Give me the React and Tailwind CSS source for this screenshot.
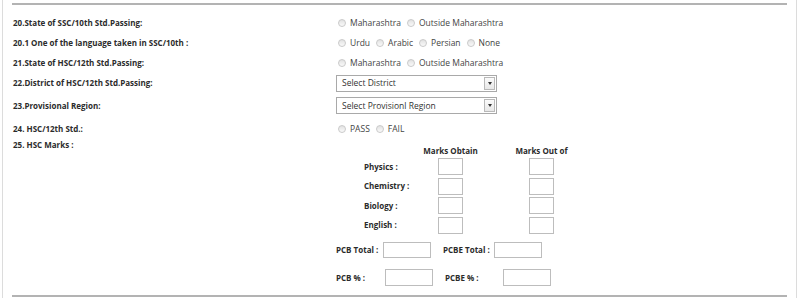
import React from 'react';

const font = { fontFamily: '"Open Sans", "Liberation Sans", sans-serif' };

function Radio({ label }) {
  return (
    <label className="flex items-center gap-[4px] mr-[6px] text-[8.5px]">
      <span className="w-[8px] h-[8px] rounded-full border border-[#cacaca] bg-gradient-to-b from-[#e2e2e2] to-[#fafafa]" />
      <span>{label}</span>
    </label>
  );
}

function Select({ text }) {
  return (
    <div className="flex items-center w-[161px] h-[17px] border border-[#a9a9a9] bg-white pl-[5px] pr-[1px] text-[8.5px]">
      <span className="flex-1 text-[#333]">{text}</span>
      <span className="w-[11px] h-[13px] border border-[#b9b9b9] bg-gradient-to-b from-[#fbfbfb] to-[#e8e8e8] flex items-center justify-center">
        <span className="w-0 h-0 border-l-[2.5px] border-r-[2.5px] border-t-[3px] border-l-transparent border-r-transparent border-t-[#333]" />
      </span>
    </div>
  );
}

function Row({ label, h, children }) {
  return (
    <div className={`flex items-center ${h}`}>
      <div className="w-[323px] font-bold text-[#2b2b2b]">{label}</div>
      <div className="flex items-center">{children}</div>
    </div>
  );
}

function Box({ w = 'w-[25px]', h = 'h-[17px]' }) {
  return <div className={`${w} ${h} border border-[#bdbdbd] bg-white`} />;
}

function MarkRow({ label }) {
  return (
    <div className="flex items-center h-[19.5px]">
      <div className="w-[64px] font-bold text-[#2b2b2b]">{label}</div>
      <div className="w-[45px] flex justify-center"><Box /></div>
      <div className="w-[46px]" />
      <div className="w-[45px] flex justify-center"><Box /></div>
    </div>
  );
}

export default function App() {
  return (
    <div className="w-[800px] h-[298px] bg-white overflow-hidden" style={font}>
      <div className="ml-[2px] w-[795px] h-[298px] border-x border-[#dcdcdc] px-[10px] text-[8px] leading-[12px] text-[#444] flex flex-col">
        <div className="mt-[3px] h-[2px] bg-[#b3b3b3] mx-[-1px]" />

        <div className="mt-[8px]">
          <Row label="20.State of SSC/10th Std.Passing:" h="h-[20px]">
            <div className="ml-[2px] flex"><Radio label="Maharashtra" /><Radio label="Outside Maharashtra" /></div>
          </Row>
          <Row label="20.1 One of the language taken in SSC/10th :" h="h-[20px]">
            <div className="ml-[2px] flex"><Radio label="Urdu" /><Radio label="Arabic" /><Radio label="Persian" /><Radio label="None" /></div>
          </Row>
          <Row label="21.State of HSC/12th Std.Passing:" h="h-[19px]">
            <div className="ml-[2px] flex"><Radio label="Maharashtra" /><Radio label="Outside Maharashtra" /></div>
          </Row>
          <Row label="22.District of HSC/12th Std.Passing:" h="h-[22px]">
            <Select text="Select District" />
          </Row>
          <Row label="23.Provisional Region:" h="h-[23px]">
            <Select text="Select Provisionl Region" />
          </Row>
          <Row label="24. HSC/12th Std.:" h="h-[23px]">
            <div className="ml-[2px] flex"><Radio label="PASS" /><Radio label="FAIL" /></div>
          </Row>

          <div className="flex mt-[-1px]">
            <div className="w-[323px] font-bold text-[#2b2b2b]">25. HSC Marks :</div>
            <div className="pt-[6px]">
              <div className="ml-[28px]">
                <div className="flex items-center h-[12px] font-bold text-[#2b2b2b]">
                  <div className="w-[64px]" />
                  <div className="w-[45px] flex justify-center whitespace-nowrap">Marks Obtain</div>
                  <div className="w-[46px]" />
                  <div className="w-[45px] flex justify-center whitespace-nowrap">Marks Out of</div>
                </div>
                <MarkRow label="Physics :" />
                <MarkRow label="Chemistry :" />
                <MarkRow label="Biology :" />
                <MarkRow label="English :" />
              </div>

              <div className="flex items-center mt-[7px] h-[16px] font-bold text-[#2b2b2b]">
                <span className="w-[47px]">PCB Total :</span>
                <Box w="w-[48px]" h="h-[16px]" />
                <span className="ml-[12px] w-[51px]">PCBE Total :</span>
                <Box w="w-[48px]" h="h-[16px]" />
              </div>
              <div className="flex items-center mt-[11px] h-[17px] font-bold text-[#2b2b2b]">
                <span className="w-[49px]">PCB % :</span>
                <Box w="w-[48px]" h="h-[17px]" />
                <span className="ml-[12px] w-[58px]">PCBE % :</span>
                <Box w="w-[48px]" h="h-[17px]" />
              </div>
            </div>
          </div>
        </div>

        <div className="mt-auto mb-[1px] h-[2px] bg-[#b3b3b3] mx-[-1px]" />
      </div>
    </div>
  );
}
